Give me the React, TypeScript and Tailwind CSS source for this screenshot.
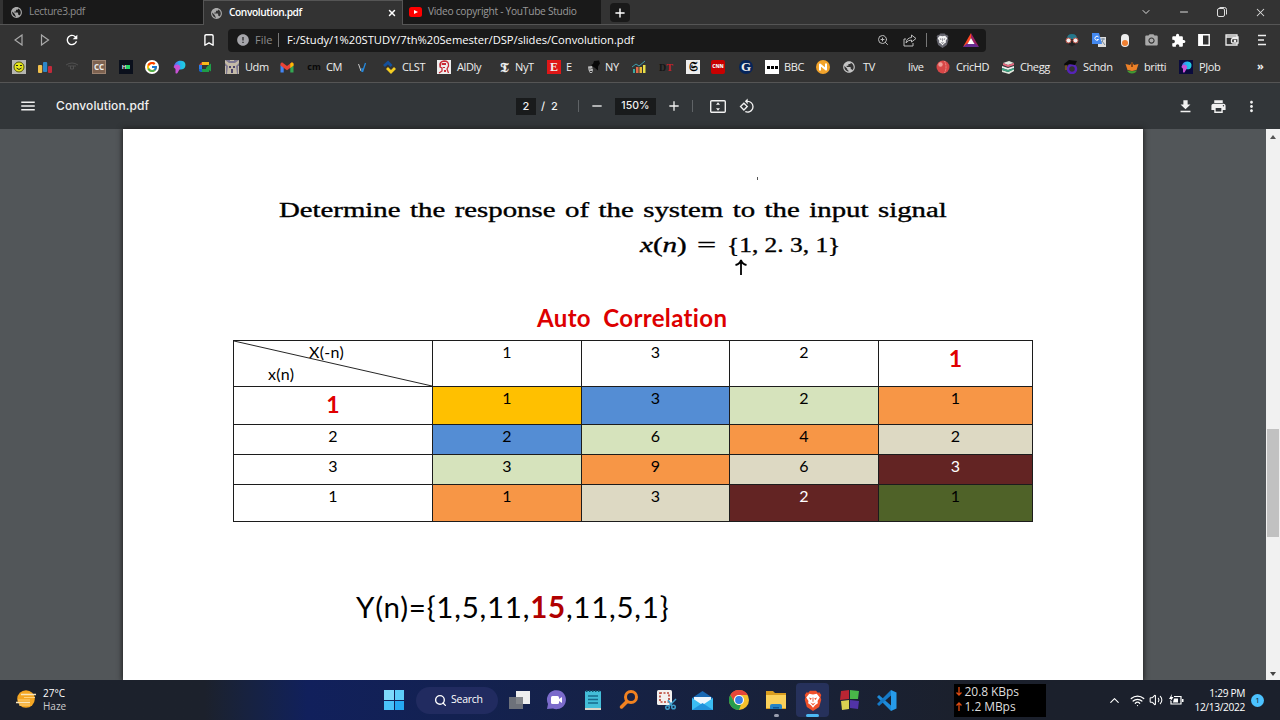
import React from "react";
import {
  MdPublic,
  MdRefresh,
  MdMenu,
  MdFileDownload,
  MdPrint,
  MdMoreVert,
  MdRotate90DegreesCcw,
  MdExtension,
  MdCameraAlt,
  MdError,
  MdAdd,
  MdRemove,
} from "react-icons/md";
import { FcGoogle } from "react-icons/fc";
import { Bookmark, ZoomIn, X, ChevronDown, ChevronUp, Minus, Plus, Search, Wifi, Volume2 } from "lucide-react";

const BraveLion = ({ className, fill, face }: { className: string; fill: string; face: string }) => (
  <svg viewBox="0 0 24 28" className={className}>
    <path
      d="M8 1h8l2.500 2.600 2-.5L23 6.500l-1 3 1 3.500-2.800 9.500-8.200 5.500-8.200-5.500L1 13l1-3.500-1-3 2.500-3.400 2 .5z"
      fill={fill}
    />
    <path d="M7 5l5 1 5-1 4 5-3 4.500 .5 3-3.800 2.700L12 23.500l-2.700-3.300-3.800-2.700 .5-3L3 10z" fill={face} />
    <path d="M6.500 10l4 1.400-1.800 1.800zM17.500 10l-4 1.400 1.800 1.800zM11.400 10h1.200v5.500h-1.200zM8.500 16.500l3.500 1.800 3.500-1.800-3.500 4.200z" fill={fill} />
  </svg>
);

const Pen = ({ className }: { className: string }) => (
  <svg viewBox="0 0 14 14" className={className}>
    <defs>
      <linearGradient id="pen" x1="0" x2="1">
        <stop offset="0" stopColor="#6a5cf0" />
        <stop offset=".5" stopColor="#22b4ee" />
        <stop offset="1" stopColor="#22d0e0" />
      </linearGradient>
    </defs>
    <path d="M2 6C3 2 6 .5 9 .7c3.500 .2 5 2.700 4.300 5.600-.6 2.700-3 3.700-6 3.200z" fill="url(#pen)" />
    <path d="M1.500 7q1-2.500 4-2.500Q9 5 8 8.500L5.500 13q-1.200 1-2 0V9z" fill="#c852d6" />
  </svg>
);

type BookmarkItem = { width: string; gap?: string; label?: string; icon: React.ReactNode };

const box = "flex h-3.5 w-3.5 items-center justify-center shrink-0";

const bookmarks: BookmarkItem[] = [
  {
    width: "w-[26px]",
    icon: (
      <svg viewBox="0 0 14 14" className="w-3.5 h-3.5">
        <rect width="14" height="14" fill="#b5b5b0" />
        <circle cx="7" cy="7" r="5" fill="#e6e619" stroke="#55550a" />
        <path d="M4 5.500h2M8 5.500h2M4.500 8q2.500 3 5 0" stroke="#222" fill="none" />
      </svg>
    ),
  },
  {
    width: "w-[27px]",
    icon: (
      <svg viewBox="0 0 14 14" className="w-3.5 h-3.5">
        <rect x="0" y="5" width="4.200" height="8" rx="1" fill="#f2c14b" />
        <rect x="5" y="2" width="4.200" height="10" rx="1" fill="#2d87c8" />
        <rect x="10" y="6" width="4" height="7" rx="1" fill="#c22a3b" />
      </svg>
    ),
  },
  {
    width: "w-[27px]",
    icon: (
      <svg viewBox="0 0 14 14" className="w-3.5 h-3.5">
        <path d="M1 5q6-4 12 0M3 6h8M5.500 6v3h3V6" stroke="#505050" fill="none" />
      </svg>
    ),
  },
  {
    width: "w-[27px]",
    icon: <span className={`${box} bg-[#7d6250] text-[8px] font-bold border border-[#9d8371]`}>CC</span>,
  },
  {
    width: "w-[26px]",
    icon: (
      <span className={`${box} bg-[#0b101c] text-[6px] font-bold`}>
        H<i className="w-1 h-1 bg-[#24d366]" />
      </span>
    ),
  },
  {
    width: "w-[27px]",
    icon: (
      <span className={`${box} rounded-full bg-white`}>
        <FcGoogle size={12} />
      </span>
    ),
  },
  { width: "w-[26px]", icon: <Pen className="w-3.5 h-3.5" /> },
  {
    width: "w-[27px]",
    icon: (
      <svg viewBox="0 0 14 14" className="w-3.5 h-3.5">
        <path d="M4 2h7v3H4z" fill="#f6b91a" />
        <path d="M1 5l3-3v3z" fill="#e04434" />
        <path d="M1 5h3v4H1z" fill="#2a7de8" />
        <path d="M1 9h3v3H2.500L1 11z" fill="#1b62c4" />
        <path d="M4 9h4V7l3 2v3H4zM9 6.500l4-3v8l-4-3z" fill="#1f9d48" />
      </svg>
    ),
  },
  {
    width: "w-[55px]",
    gap: "gap-1.5",
    label: "Udm",
    icon: (
      <svg viewBox="0 0 14 14" className="w-3.5 h-3.5">
        <rect width="14" height="14" fill="#7d7892" />
        <path d="M0 0l4 3h6l4-3v3l-3 3 1 8H2l1-8-3-3z" fill="#c4bba8" />
        <path d="M4 6h2v2H4zM8 6h2v2H8zM6 9h2v4H6z" fill="#4b4468" />
        <path d="M0 6h1v8H0zM13 6h1v8h-1zM5 0h4v1H5z" fill="#c4bba8" />
      </svg>
    ),
  },
  {
    width: "w-[27px]",
    icon: (
      <svg viewBox="0 0 14 14" className="w-3.5 h-3.5">
        <path d="M.5 4.500v8H3.700V6z" fill="#4285f4" />
        <path d="M10.300 6v6.500h3.200v-8z" fill="#34a853" />
        <path d="M.5 3.500L2 2.200 7 6l5-3.800 1.500 1.300v2L7 10.200.5 5.500z" fill="#ea4335" />
        <path d="M10.300 3.500l1.700-1.300 1.500 1.300v2L10.300 8z" fill="#fbbc04" />
      </svg>
    ),
  },
  { width: "w-[50px]", gap: "gap-[5px]", label: "CM", icon: <span className={`${box} text-[#080808] text-[9px] font-bold`}>cm</span> },
  {
    width: "w-[26px]",
    icon: (
      <svg viewBox="0 0 14 14" className="w-3.5 h-3.5" fill="none">
        <path d="M1.500 4l2.500 7" stroke="#c8c8c8" />
        <path d="M5 12V8M8.500 3L5.500 12" stroke="#2689dc" strokeWidth="1.300" />
      </svg>
    ),
  },
  {
    width: "w-[54px]",
    gap: "gap-[5px]",
    label: "CLST",
    icon: (
      <svg viewBox="0 0 14 14" className="w-3.5 h-3.5 overflow-visible" fill="none" strokeWidth="2.800">
        <path d="M1 6l4-3.500L8.500 6" stroke="#14509d" />
        <path d="M4 8l4 4 4-4" stroke="#f4cd22" />
      </svg>
    ),
  },
  {
    width: "w-[60px]",
    gap: "gap-1.5",
    label: "AlDly",
    icon: (
      <svg viewBox="0 0 14 14" className="w-3.5 h-3.5">
        <rect width="14" height="14" fill="#eee" />
        <path d="M3 6q-1-4 4-5 5 0 4.500 5L10 9l1.500 4M4 3l-1 4 2 1v3l-3 2" fill="none" stroke="#c92b35" strokeWidth="1.300" />
        <path d="M5 3h4v2H5zM6 7h2v1H6zM7 10h2v2H7z" fill="#c92b35" />
      </svg>
    ),
  },
  { width: "w-[50px]", gap: "gap-1", label: "NyT", icon: <span className={`${box} font-['Liberation_Serif',serif] text-[14px] font-bold`}>𝕿</span> },
  { width: "w-10", gap: "gap-[5px]", label: "E", icon: <span className={`${box} bg-[#df1717] font-['Liberation_Serif',serif] text-xs font-bold`}>E</span> },
  {
    width: "w-[45px]",
    gap: "gap-1",
    label: "NY",
    icon: (
      <svg viewBox="0 0 14 14" className="w-3.5 h-3.5">
        <path d="M1 6.500l4-.5 1 4-1 3H3L1.500 10z" fill="#bbb" />
        <path d="M2.500 9h1M5 8v1M3 11.500h2" stroke="#333" />
        <path d="M4 5l2-1 1-3 5-.5 1 3-2 3v4L8 8z" fill="#080808" />
      </svg>
    ),
  },
  {
    width: "w-[27px]",
    icon: (
      <svg viewBox="0 0 14 14" className="w-3.5 h-3.5">
        <path d="M1 9h2v4H1z" fill="#3aa9a1" />
        <path d="M4 7h2.500v6H4z" fill="#e36b4a" />
        <path d="M7.500 7H10v6H7.500z" fill="#e8ba37" />
        <path d="M11 5h2.500v8H11z" fill="#e8e04a" />
        <path d="M0 7l4-3 3 2 6-5" stroke="#3d9fae" fill="none" />
      </svg>
    ),
  },
  {
    width: "w-[27px]",
    icon: (
      <span className={`${box} font-['Liberation_Serif',serif] text-[10px] font-bold text-[#151515]`}>
        D<b className="text-[#c9202a]">T</b>
      </span>
    ),
  },
  { width: "w-[25px]", icon: <span className={`${box} w-3 bg-[#eee] text-black font-['Liberation_Serif',serif] text-[13px] font-bold`}>𝕾</span> },
  { width: "w-7", icon: <span className={`${box} rounded-xs bg-[#c90000] text-[5px] font-black`}>CNN</span> },
  { width: "w-[26px]", icon: <span className={`${box} w-3 rounded-full bg-[#06255a] font-['Liberation_Serif',serif] text-[13px] font-bold`}>G</span> },
  {
    width: "w-[51px]",
    gap: "gap-[5px]",
    label: "BBC",
    icon: (
      <span className={`${box} gap-px bg-white`}>
        <i className="w-[3px] h-[3px] bg-black" />
        <i className="w-[3px] h-[3px] bg-black" />
        <i className="w-[3px] h-[3px] bg-black" />
      </span>
    ),
  },
  {
    width: "w-[26px]",
    icon: (
      <svg viewBox="0 0 14 14" className="w-3.5 h-3.5">
        <circle cx="7" cy="7" r="7" fill="#f2a32b" />
        <path d="M4 10.500V4.500L10 9.500V3.500" stroke="#fff" strokeWidth="2" fill="none" strokeLinejoin="round" />
      </svg>
    ),
  },
  { width: "w-[46px]", gap: "gap-[7px]", label: "TV", icon: <MdPublic size={14} className="text-[#c4c4c4]" /> },
  { width: "w-12", gap: "gap-[6px]", label: "live", icon: <span className={box} /> },
  {
    width: "w-[65px]",
    gap: "gap-1.5",
    label: "CricHD",
    icon: (
      <svg viewBox="0 0 14 14" className="w-3.5 h-3.5">
        <circle cx="7" cy="7" r="6.500" fill="#d84747" />
        <path d="M8.500 1q3 6 0 12" stroke="#efa09a" fill="none" strokeDasharray="1 .6" />
        <circle cx="4.500" cy="4.500" r="2.200" fill="#ee9d97" />
      </svg>
    ),
  },
  {
    width: "w-[63px]",
    gap: "gap-[5px]",
    label: "Chegg",
    icon: (
      <svg viewBox="0 0 14 14" className="w-3.5 h-3.5">
        <path d="M2 3l6-2 5 2-6 2zM1 10l6 2 6-3v2l-5 3-7-2z" fill="#e0e6dc" />
        <path d="M2 3l5 2 6-2v2L7 7 2 5z" fill="#e4677e" />
        <path d="M1 6l6 2 6-2v2l-6 2-6-2z" fill="#eeeeee" />
        <path d="M1 8l6 2 6-2v1.500L7 12 1 10z" fill="#3ca382" />
      </svg>
    ),
  },
  {
    width: "w-[61px]",
    gap: "gap-[5px]",
    label: "Schdn",
    icon: (
      <svg viewBox="0 0 14 14" className="w-3.5 h-3.5">
        <circle cx="8" cy="9" r="4" fill="none" stroke="#5524b6" strokeWidth="2.500" />
        <path d="M0 4l5-4 8 1-2 4-6-1-3 2H1z" fill="#090909" />
        <path d="M2 5v5" stroke="#a86e14" />
      </svg>
    ),
  },
  {
    width: "w-[54px]",
    gap: "gap-[5px]",
    label: "britti",
    icon: (
      <svg viewBox="0 0 14 14" className="w-3.5 h-3.5">
        <path d="M.5 4l4.500 1 2-3 2 3 4.500-1-2 6-4.500 1-4.500-1z" fill="#ed8128" />
        <path d="M6 3h2v4H6z" fill="#8a4614" />
        <path d="M2 10.500q5 1.500 10 0-1.500 3-5 3t-5-3z" fill="#419b31" />
      </svg>
    ),
  },
  {
    width: "w-[77px]",
    gap: "gap-1.5",
    label: "PJob",
    icon: (
      <span className={`${box} bg-[#0a0b3d]`}>
        <Pen className="w-3 h-3" />
      </span>
    ),
  },
];

const Tabs = () => (
  <div className="flex h-[25px] items-stretch bg-[#333333] border-b border-[#555] pl-[3px] text-[10.200px]">
    <div className="w-[200px] bg-[#191919] flex items-center gap-1.5 pl-[7px] text-[#8d8d8d]">
      <MdPublic size={13} className="text-[#aaa]" />
      <span className="tracking-[-0.350px]">Lecture3.pdf</span>
    </div>
    <div className="w-[200px] -mb-px bg-[#333333] border-x border-t border-[#555] flex items-center pl-1.5 pr-[5px] text-white">
      <MdPublic size={13} className="text-[#aaa]" />
      <span className="ml-1.5 flex-1 font-semibold tracking-[-0.400px]">Convolution.pdf</span>
      <X size={10} strokeWidth={3.5} />
    </div>
    <div className="w-[198px] bg-[#191919] flex items-center gap-1.5 pl-1.5 text-[#999]">
      <svg viewBox="0 0 13 10" className="w-[13px] h-2.5">
        <rect width="13" height="10" rx="2.500" fill="#f00" />
        <path d="M5 3l4 2-4 2z" fill="#fff" />
      </svg>
      <span className="tracking-[-0.270px]">Video copyright - YouTube Studio</span>
    </div>
    <div className="ml-[9px] mt-[3px] w-5 h-[19px] rounded-sm bg-[#191919] flex items-center justify-center text-white">
      <Plus size={14} strokeWidth={2.4} />
    </div>
    <div className="ml-auto flex items-center text-[#ddd] pr-[13px]">
      <ChevronDown size={12} strokeWidth={2} className="mr-[26px]" />
      <Minus size={12} strokeWidth={2} className="mr-[27px]" />
      <svg viewBox="0 0 10 10" className="w-2.5 h-2.5 mr-[27px]" fill="none" stroke="#ddd">
        <rect x=".5" y="1.500" width="7" height="8" rx="1.500" />
        <path d="M2.500 .5h5q2 0 2 2v5" />
      </svg>
      <X size={13} strokeWidth={1.9} />
    </div>
  </div>
);

const AddressBar = () => (
  <div className="flex h-[30px] items-center bg-[#333333] text-white">
    <svg viewBox="0 0 36 12" className="ml-[14px] w-9 h-3" fill="none" stroke="#aaa" strokeWidth="1.200">
      <path d="M8 1v10L1 6z" />
      <path d="M27.500 1v10l7-5z" />
    </svg>
    <MdRefresh size={16} className="ml-[14px]" />
    <Bookmark size={14} strokeWidth={2.4} className="ml-[122px]" />
    <div className="ml-3 w-[758px] h-[23px] rounded bg-[#191919] flex items-center pl-2 pr-[7px]">
      <MdError size={14} className="text-[#a5a5aa]" />
      <span className="ml-[5px] w-[19px] text-[11px] text-[#8c8c8c]">File</span>
      <span className="ml-[4px] w-px h-3.5 bg-[#777]" />
      <span className="ml-2 flex-1 text-[11.200px] tracking-[-0.020px] whitespace-nowrap">F:/Study/1%20STUDY/7th%20Semester/DSP/slides/Convolution.pdf</span>
      <ZoomIn size={12} strokeWidth={2} className="text-[#bbb]" />
      <svg viewBox="0 0 14 13" className="ml-[14px] w-3.5 h-[13px]" fill="none" stroke="#bbb">
        <path d="M3 5H1v7h9V9M8.500 1L13 4.500 8.500 8V6Q5 6 3 9q.5-5 5.500-5.500z" />
      </svg>
      <span className="ml-[9px] w-px h-3.5 bg-[#777]" />
      <BraveLion className="ml-[9px] w-[13px] h-[15px]" fill="#65656e" face="#f4f4f4" />
      <svg viewBox="0 0 16 14" className="ml-[14px] w-4 h-3.5">
        <path d="M8 0L0 14l5-3 3-6z" fill="#ff4724" />
        <path d="M8 0l8 14-5-3-3-6z" fill="#9e1f63" />
        <path d="M0 14l4-3.500h8l4 3.500z" fill="#662d91" />
        <path d="M8 5l3.500 6h-7z" fill="#fff" />
      </svg>
    </div>
    <div className="flex items-center ml-[79px]">
      <svg viewBox="0 0 14 14" className="w-3.5 h-3.5">
        <path d="M2 6q0-5 5-5t5 5z" fill="#25778b" />
        <path d="M3 6h8v5l-4 2.500L3 11z" fill="#222" />
        <circle cx="3.500" cy="7.500" r="2.500" fill="#eee" stroke="#c45246" />
        <circle cx="10.500" cy="7.500" r="2.500" fill="#eee" stroke="#c45246" />
      </svg>
      <svg viewBox="0 0 14 14" className="ml-[13px] w-3.5 h-3.5">
        <rect x="6" y="4" width="8" height="10" fill="#ddd" />
        <path d="M9 6h4M11 5v2l-3 4M10 8l3 4" stroke="#789" fill="none" />
        <path d="M0 0h7l3 11H0z" fill="#4489ef" />
        <path d="M6.500 4A2 2 0 1 0 6.500 6.500H5" stroke="#fff" fill="none" />
      </svg>
      <svg viewBox="0 0 8 13" className="ml-[15px] w-2 h-[13px]">
        <rect width="8" height="13" rx="4" fill="#eee" />
        <circle cx="4" cy="9" r="3" fill="#f08032" />
      </svg>
      <MdCameraAlt size={15} className="ml-[15px] text-[#aaa]" />
      <MdExtension size={15} className="ml-3" />
      <svg viewBox="0 0 12 12" className="ml-[12px] w-3 h-3">
        <path d="M.8.800h10.400v10.400H.8z" fill="none" stroke="#fff" strokeWidth="1.400" />
        <path d="M1 1h4v10H1z" fill="#fff" />
      </svg>
      <svg viewBox="0 0 14 12" className="ml-[15px] w-3.5 h-3" fill="none" stroke="#eee" strokeWidth="1.300">
        <path d="M12 3V1H1v10h11V9M1 3h12v6H8q-1.500 0-1.500-1.500V6Q6.500 4.500 8 4.500h5" />
        <circle cx="10" cy="7" r=".7" />
      </svg>
      <svg viewBox="0 0 9 12" className="ml-[18px] w-[9px] h-3" stroke="#eee" strokeWidth="1.300">
        <path d="M1 1.500h8M1 6h6M1 10.500h8" />
      </svg>
    </div>
  </div>
);

const Bookmarks = () => (
  <div className="flex h-[28px] items-center bg-[#333333] border-b border-[#555] pl-3 pb-[3px] text-[11px] text-[#eee]">
    {bookmarks.map((item, index) => (
      <div key={index} className={`flex shrink-0 items-center ${item.width} ${item.gap ?? ""}`}>
        <span className="shrink-0">{item.icon}</span>
        {item.label && <span className="whitespace-nowrap tracking-[-0.400px]">{item.label}</span>}
      </div>
    ))}
    <span className="font-bold leading-none -mt-1 ml-px">»</span>
  </div>
);

const PdfToolbar = () => (
  <div className="flex h-[46px] items-center bg-[#323639] text-[#f1f1f1] font-['Inter',sans-serif] text-[11px] font-medium">
    <MdMenu size={18} className="ml-[19px]" />
    <span className="ml-[19px] w-[460px] text-xs tracking-[0.080px]">Convolution.pdf</span>
    <span className="w-5 h-[17px] bg-[#191b1c] flex items-center justify-center">2</span>
    <span className="ml-[5px]">/</span>
    <span className="ml-1.5">2</span>
    <span className="ml-[20px] w-px h-3 bg-[#5f6366]" />
    <MdRemove size={16} className="ml-[10px]" />
    <span className="ml-[10px] w-[41px] h-[17px] bg-[#191b1c] flex items-center justify-center text-[10.500px]">150%</span>
    <MdAdd size={16} className="ml-[10px]" />
    <span className="ml-[10px] w-px h-3 bg-[#5f6366]" />
    <svg viewBox="0 0 16 13" className="ml-[17px] w-4 h-[13px]" fill="none" stroke="#f1f1f1" strokeWidth="1.400">
      <rect x=".7" y=".7" width="14.600" height="11.600" rx="1" />
      <path d="M8 2.300l2 2.400H6zM8 10.700l2-2.400H6z" fill="#f1f1f1" stroke="none" />
    </svg>
    <MdRotate90DegreesCcw size={16} className="ml-[13px]" />
    <div className="ml-auto flex items-center pr-5">
      <MdFileDownload size={17} />
      <MdPrint size={17} className="ml-4" />
      <MdMoreVert size={17} className="ml-4" />
    </div>
  </div>
);

const rows = [
  {
    height: "h-[38px]",
    head: "1",
    cells: [
      { value: 1, color: "bg-[#ffc000]" },
      { value: 3, color: "bg-[#548dd4]" },
      { value: 2, color: "bg-[#d6e3bc]" },
      { value: 1, color: "bg-[#f79646]" },
    ],
  },
  {
    height: "h-[30px]",
    head: "2",
    cells: [
      { value: 2, color: "bg-[#548dd4]" },
      { value: 6, color: "bg-[#d6e3bc]" },
      { value: 4, color: "bg-[#f79646]" },
      { value: 2, color: "bg-[#ddd9c3]" },
    ],
  },
  {
    height: "h-[30px]",
    head: "3",
    cells: [
      { value: 3, color: "bg-[#d6e3bc]" },
      { value: 9, color: "bg-[#f79646]" },
      { value: 6, color: "bg-[#ddd9c3]" },
      { value: 3, color: "bg-[#632423] text-white" },
    ],
  },
  {
    height: "h-[37px]",
    head: "1",
    cells: [
      { value: 1, color: "bg-[#f79646]" },
      { value: 3, color: "bg-[#ddd9c3]" },
      { value: 2, color: "bg-[#632423] text-white" },
      { value: 1, color: "bg-[#4f6228]" },
    ],
  },
];

const columns = "grid grid-cols-[199px_149px_148px_149px_154px]";
const border = "border-l border-t border-[#1c1c1c] text-center";

const CorrelationTable = () => (
  <div className="w-[800px] border-r border-b border-[#1c1c1c] text-[16px] leading-5">
    <div className={`${columns} h-[46px]`}>
      <div className="relative border-l border-t border-[#1c1c1c]">
        <svg viewBox="0 0 199 46" className="absolute inset-0 w-full h-full" preserveAspectRatio="none">
          <path d="M0 0L199 46" stroke="#222" />
        </svg>
        <div className="pl-[75px] pt-px tracking-[0.300px]">X(-n)</div>
        <div className="pl-[34px] pt-0.5 tracking-[0.300px]">x(n)</div>
      </div>
      <div className={`${border} pt-px`}>1</div>
      <div className={`${border} pt-px`}>3</div>
      <div className={`${border} pt-px`}>2</div>
      <div className={`${border} pt-[7px] text-[23px] font-bold text-[#e00000]`}>1</div>
    </div>
    {rows.map((row, index) => (
      <div key={index} className={`${columns} ${row.height}`}>
        {index === 0 ? (
          <div className={`${border} pt-[7px] text-[23px] font-bold text-[#e00000]`}>{row.head}</div>
        ) : (
          <div className={`${border} pt-px`}>{row.head}</div>
        )}
        {row.cells.map((item, i) => (
          <div key={i} className={`${border} pt-px ${item.color}`}>
            {item.value}
          </div>
        ))}
      </div>
    ))}
  </div>
);

const Viewer = () => (
  <div className="flex h-[551px] bg-[#525659]">
    <div className="flex-1 pl-[123px]">
      <div className="w-[1020px] h-full bg-white shadow-[0_0_5px_1px_#222] text-black font-['Lato',sans-serif] overflow-hidden">
        <div className="ml-[634px] mt-[48px] w-px h-[3px] bg-[#555]" />
        <div className="font-['Liberation_Serif',serif] text-[20px] leading-8 [-webkit-text-stroke:0.35px_#000]">
          <div className="ml-[156px] mt-[14px]">
            <span className="inline-block origin-left scale-x-[1.44] whitespace-nowrap [word-spacing:1.600px]">
              Determine the response of the system to the input signal
            </span>
          </div>
          <div className="ml-[517px] mt-[3px] flex">
            <span className="w-[57px]">
              <span className="inline-block origin-left scale-x-[1.45] whitespace-nowrap">
                <i>x</i>(<i>n</i>)
              </span>
            </span>
            <span className="w-[30px]">
              <span className="inline-block origin-left scale-x-[1.700]">=</span>
            </span>
            <span className="inline-block origin-left scale-x-[1.27] whitespace-nowrap">{"{1, 2. 3, 1}"}</span>
          </div>
        </div>
        <svg viewBox="0 0 14 16" className="ml-[611px] -mt-[2px] w-3.5 h-4" fill="none" stroke="#000" strokeWidth="1.800">
          <path d="M7 16V1.500M1.500 6Q6 5 7 1q1 4 5.500 5" />
        </svg>
        <div className="ml-[414px] mt-[27px] text-[24px] leading-8 font-bold text-[#dd0000] tracking-[0.350px] whitespace-pre">Auto  Correlation</div>
        <div className="ml-[110px] mt-[6px]">
          <CorrelationTable />
        </div>
        <div className="ml-[233px] mt-[65px] text-[29.500px] leading-10 tracking-[0.750px] whitespace-nowrap">
          Y(n)={"{1,5,11,"}
          <b className="text-[#b00000]">15</b>
          {",11,5,1}"}
        </div>
      </div>
    </div>
    <div className="w-[14px] bg-[#f1f1f1] flex flex-col items-center py-1">
      <i className="border-x-[3px] border-x-transparent border-b-4 border-b-[#555] mt-0.5" />
      <div className="mt-[290px] w-3 h-[108px] bg-[#c1c1c1]" />
      <i className="mt-auto border-x-[3px] border-x-transparent border-t-4 border-t-[#444]" />
    </div>
  </div>
);

const apps = [
  <svg viewBox="0 0 21 20" className="w-[21px] h-5">
    <path d="M7 1h14v13H7z" fill="#eee" />
    <path d="M0 7h14v12H0z" fill="#777a80" fillOpacity=".9" />
  </svg>,
  <svg viewBox="0 0 20 20" className="w-5 h-5">
    <path d="M1 19l1-5A9.500 9.500 0 1 1 7 18.500z" fill="#7b6bcb" />
    <rect x="5" y="6" width="8" height="8" rx="1.500" fill="#fff" />
    <path d="M13 9l3-2v6l-3-2z" fill="#fff" />
  </svg>,
  <svg viewBox="0 0 16 20" className="w-4 h-5">
    <rect y="1" width="16" height="19" rx="1" fill="#43bdd8" />
    <path d="M0 18h16v2H0z" fill="#ddd6c8" />
    <path d="M1 1h14" stroke="#14546c" strokeWidth="2" strokeDasharray="1.500 1.500" />
    <path d="M3 6h10M3 9.500h10M3 13h10" stroke="#176a8b" strokeWidth="1.300" />
  </svg>,
  <svg viewBox="0 0 20 20" className="w-5 h-5" fill="none" stroke="#f18220" strokeLinecap="round">
    <circle cx="12" cy="7" r="5.500" strokeWidth="3" />
    <path d="M7.500 12L2.500 17" strokeWidth="3.500" />
  </svg>,
  <svg viewBox="0 0 21 20" className="w-[21px] h-5">
    <rect x="1" y="0" width="15" height="15" rx="1.500" fill="#f2f0ee" />
    <path d="M4 3h9v9H4z" fill="none" stroke="#bc4637" strokeWidth="1.700" strokeDasharray="2 1.500" />
    <g fill="none" stroke="#3f9ecb" strokeWidth="1.500">
      <path d="M13 16l7-7M16 16l-4-6" />
      <circle cx="11.500" cy="17.500" r="1.800" />
      <circle cx="17.500" cy="17" r="1.800" />
    </g>
  </svg>,
  <svg viewBox="0 0 21 19" className="w-[21px] h-[19px]">
    <path d="M0 7l10.500-7L21 7v11H0z" fill="#1768b3" />
    <path d="M2 6h17v8H2z" fill="#edf6fc" />
    <path d="M0 7l10.500 7L21 7v12H0z" fill="#3bbdf3" />
    <path d="M0 19l10.500-7L21 19z" fill="#2092db" />
  </svg>,
  <svg viewBox="0 0 20 20" className="w-5 h-5">
    <circle cx="10" cy="10" r="10" fill="#f5c02d" />
    <path d="M1.300 5A10 10 0 0 1 18.700 5H10a5 5 0 0 0-4.500 7.200z" fill="#e6463a" />
    <path d="M1.300 5l4.200 7.200A5 5 0 0 0 12 14.600L10 20A10 10 0 0 1 1.300 5z" fill="#269d4d" />
    <circle cx="10" cy="10" r="5" fill="#fff" />
    <circle cx="10" cy="10" r="3.900" fill="#377fe8" />
  </svg>,
  <svg viewBox="0 0 22 20" className="w-[22px] h-5">
    <path d="M1 1h7l2 2h11v16H1z" fill="#d99d1f" />
    <path d="M1 5h20v13H1z" fill="#fad15b" />
    <path d="M5 16q0-2 2-2h8q2 0 2 2v3H5z" fill="#2684c7" />
    <path d="M8 17h6v1.500H8z" fill="#0b5697" />
  </svg>,
  <BraveLion className="w-[18px] h-[21px]" fill="#f0502a" face="#fff" />,
  <svg viewBox="0 0 20 20" className="w-5 h-5">
    <path d="M1 1l8-1v9l-9 1z" fill="#ba2533" />
    <path d="M10 0l9 1-1 8h-8z" fill="#49b649" />
    <path d="M1 11l8-1v9l-7 1z" fill="#d9d151" />
    <path d="M10 10l9 1-1 8-8-1z" fill="#5133a7" />
  </svg>,
  <svg viewBox="0 0 21 21" className="w-[21px] h-[21px]">
    <path d="M15 21v-5.500L3 5 1 7z" fill="#1e8bd9" />
    <path d="M15 0v5.500L3 16 1 14z" fill="#157ac8" />
    <path d="M15 0l5.500 2.500v16L15 21z" fill="#269bea" />
  </svg>,
];

const Taskbar = () => (
  <div className="flex h-10 items-center bg-linear-to-r from-[#1c212c] from-16% via-[#11205c] via-24% to-[#1b202c] to-75% text-white text-[11px]">
    <div className="w-[384px] flex items-center gap-[7px] pl-4 text-[10px] leading-[13px]">
      <svg viewBox="0 0 20 18" className="w-5 h-[18px] -mt-0.5">
        <circle cx="10" cy="9" r="8.800" fill="#f4a623" />
        <path d="M5 4.500h15M0 12.500h14" stroke="#f8e5ba" strokeWidth="1.500" />
        <path d="M8 7.500h11M2 10h12M3 15h11" stroke="#ffd37c" strokeWidth="1" />
      </svg>
      <div>
        <div>27°C</div>
        <div className="text-[#ccc]">Haze</div>
      </div>
    </div>
    <div className="grid grid-cols-2 gap-px w-5 h-5">
      <i className="bg-[#7edafb]" />
      <i className="bg-[#5ccdf9]" />
      <i className="bg-[#4ac2f8]" />
      <i className="bg-[#25a9f2]" />
    </div>
    <div className="ml-3 w-[82px] h-[27px] rounded-full bg-[#212b60] flex items-center pl-[18px] gap-1 text-[10.500px]">
      <Search size={13} strokeWidth={2.5} />
      <span className="tracking-[-0.250px]">Search</span>
    </div>
    <div className="ml-[3px] flex">
      {apps.map((icon, index) => (
        <div key={index} className="w-[36.700px] flex justify-center">
          <div
            className={
              index === 8
                ? "relative w-[33px] h-[34px] rounded bg-[#26315b] flex items-center justify-center"
                : "relative w-[33px] h-[34px] flex items-center justify-center"
            }
          >
            {icon}
            {index === 8 && <span className="absolute bottom-0 w-[13px] h-[3px] rounded-full bg-[#4cb9f4]" />}
            {index === 7 && <span className="absolute bottom-0 w-[5px] h-[3px] rounded-full bg-[#999eaf]" />}
          </div>
        </div>
      ))}
    </div>
    <div className="ml-[49px] w-[92px] h-[33px] bg-black pl-[2px] text-[12px] leading-[15.500px] tracking-[-0.080px] text-[#ddd]">
      <div className="flex items-center gap-[3px] whitespace-nowrap">
        <svg viewBox="0 0 6 9" className="w-1.5 h-[9px]" stroke="#e04b12" strokeWidth="1.300" fill="none">
          <path d="M3 0v8M.5 5.500L3 8l2.500-2.500" />
        </svg>
        20.8 KBps
      </div>
      <div className="flex items-center gap-[3px] whitespace-nowrap">
        <svg viewBox="0 0 6 9" className="w-1.5 h-[9px]" stroke="#e04b12" strokeWidth="1.300" fill="none">
          <path d="M3 9V1M.5 3.500L3 1l2.500 2.500" />
        </svg>
        1.2 MBps
      </div>
    </div>
    <div className="ml-auto flex items-center pr-4">
      <ChevronUp size={15} strokeWidth={1.8} />
      <Wifi size={15} strokeWidth={2} className="ml-[8px]" />
      <Volume2 size={14} strokeWidth={1.8} className="ml-[4px]" />
      <svg viewBox="0 0 15 12" className="ml-[6px] w-[15px] h-3">
        <path d="M5 2.500h7v7.500H2V7" fill="none" stroke="#fff" strokeWidth="1.200" />
        <path d="M5 4.500h4v4H4zM13 5h1.500v3H13zM3 0L0 5h2L1 8l3.500-5h-2z" fill="#fff" />
      </svg>
      <div className="w-[61px] text-right text-[10.200px] leading-[14px] tracking-[-0.350px] whitespace-nowrap">
        <div>1:29 PM</div>
        <div>12/13/2022</div>
      </div>
      <span className="ml-1.5 w-[13px] h-[13px] rounded-full bg-[#4cc2ff] text-[#123] text-[8px] flex items-center justify-center">1</span>
    </div>
  </div>
);

const App: React.FC = () => {
  return (
    <div className="w-[1280px] h-[720px] overflow-hidden flex flex-col font-['Open_Sans',sans-serif]">
      <Tabs />
      <AddressBar />
      <Bookmarks />
      <PdfToolbar />
      <Viewer />
      <Taskbar />
    </div>
  );
};

export default App;
